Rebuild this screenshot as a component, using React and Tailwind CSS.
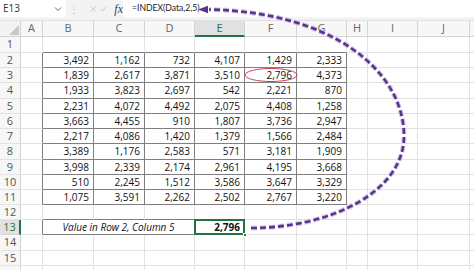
import React from 'react';

// column widths: row header, A, B, C, D, E, F, G, H, I, J, K
const COLS = ['w-[21px]', 'w-[22px]', 'w-[51px]', 'w-[51px]', 'w-[50px]', 'w-[50px]', 'w-[52px]', 'w-[50px]', 'w-[21px]', 'w-[50px]', 'w-[52px]', 'w-[20px]'];
const LETTERS = ['A', 'B', 'C', 'D', 'E', 'F', 'G', 'H', 'I', 'J', ''];

const DATA = [
  ['3,492', '1,162', '732', '4,107', '1,429', '2,333'],
  ['1,839', '2,617', '3,871', '3,510', '2,796', '4,373'],
  ['1,933', '3,823', '2,697', '542', '2,221', '870'],
  ['2,231', '4,072', '4,492', '2,075', '4,408', '1,258'],
  ['3,663', '4,455', '910', '1,807', '3,736', '2,947'],
  ['2,217', '4,086', '1,420', '1,379', '1,566', '2,484'],
  ['3,389', '1,176', '2,583', '571', '3,181', '1,909'],
  ['3,998', '2,339', '2,174', '2,961', '4,195', '3,668'],
  ['510', '2,245', '1,512', '3,586', '3,647', '3,329'],
  ['1,075', '3,591', '2,262', '2,502', '2,767', '3,220'],
];

const DATA_H = ['h-[15px]', 'h-[15px]', 'h-[16px]', 'h-[15px]', 'h-[15px]', 'h-[15px]', 'h-[16px]', 'h-[15px]', 'h-[15px]', 'h-[15px]'];

const RowHead = ({ n, active }) => (
  <div
    className={
      active
        ? 'w-[21px] shrink-0 flex items-center justify-center bg-[#e1e1e1] border-r-2 border-r-[#217346] border-b border-b-[#d4d4d4] text-[11px] text-[#217346]'
        : 'w-[21px] shrink-0 flex items-center justify-center bg-[#f7f7f7] border-r border-r-[#d4d4d4] border-b border-b-[#e2e2e2] text-[11px] text-[#555]'
    }
  >
    {n}
  </div>
);

// a plain cell; rb / bb flag dark right / bottom borders
const Cell = ({ col, rb, bb, children }) => (
  <div
    className={`${COLS[col]} shrink-0 border-r border-b ${rb ? 'border-r-[#7f7f7f]' : 'border-r-[#e2e2e2]'} ${bb ? 'border-b-[#7f7f7f]' : 'border-b-[#e2e2e2]'} flex items-center justify-end pr-[4px]`}
  >
    {children}
  </div>
);

const Toolbar = () => (
  <div className="h-[21px] flex items-start bg-[#f3f3f3] border-b border-[#e0e0e0] text-[10px] text-[#333]">
    <div className="w-[66px] h-[17px] bg-white flex items-center justify-between pl-[3px] pr-[4px]">
      <span>E13</span>
      <svg width="8" height="6" viewBox="0 0 8 6"><path d="M1 1.5 L4 4.5 L7 1.5" fill="none" stroke="#666" strokeWidth="1" /></svg>
    </div>
    <div className="w-[57px] h-[17px] flex items-center">
      <span className="ml-[3px] text-[#bbb] leading-none">⋮</span>
      <svg className="ml-[11px]" width="10" height="10" viewBox="0 0 10 10"><path d="M1 1 L9 9 M9 1 L1 9" stroke="#b8b8b8" strokeWidth="1" /></svg>
      <svg className="ml-[3px]" width="10" height="10" viewBox="0 0 10 10"><path d="M1 5 L4 8 L9 1.5" fill="none" stroke="#b8b8b8" strokeWidth="1" /></svg>
      <span className="ml-[8px] italic font-['Liberation_Serif',serif] text-[12px] text-[#444]">fx</span>
    </div>
    <div className="flex-1 h-[17px] bg-white flex items-center pl-[9px] font-['Lato',sans-serif] text-[8.6px] text-[#222]">=INDEX(Data,2,5)</div>
  </div>
);

const HeaderRow = () => (
  <div className="flex h-[16px] text-[11px] text-[#666]">
    <div className="w-[21px] shrink-0 relative bg-[#f3f3f3] border-r border-b border-[#d4d4d4]">
      <svg className="absolute right-[1px] bottom-[1px]" width="10" height="10" viewBox="0 0 10 10"><path d="M10 0 L10 10 L0 10 Z" fill="#c8c8c8" /></svg>
    </div>
    {LETTERS.map((l, i) => (
      <div
        key={i}
        className={
          i === 4
            ? `${COLS[i + 1]} shrink-0 flex items-center justify-center bg-[#e1e1e1] border-r border-r-[#d4d4d4] border-b-2 border-b-[#217346] text-[#217346]`
            : `${COLS[i + 1]} shrink-0 flex items-center justify-center bg-[#f7f7f7] border-r border-b border-[#d4d4d4]`
        }
      >
        {l}
      </div>
    ))}
  </div>
);

const Arrow = () => (
  <svg className="absolute left-0 top-0 pointer-events-none" width="474" height="270" viewBox="0 0 474 270">
    <ellipse cx="271" cy="75" rx="26" ry="6.5" fill="none" stroke="#d23e5a" strokeWidth="1" />
    <path d="M251 228 C330 228 404 192 404 136 C404 72 334 12 209 9.5" fill="none" stroke="#c7b2e6" strokeWidth="5" strokeDasharray="6 3" opacity="0.7" />
    <path d="M251 228 C330 228 404 192 404 136 C404 72 334 12 209 9.5" fill="none" stroke="#573689" strokeWidth="2.6" strokeDasharray="6 3" />
    <polygon points="198,9.5 208,5.8 208,13.2" fill="#573689" />
  </svg>
);

export default function App() {
  return (
    <div className="relative w-[474px] h-[270px] overflow-hidden bg-white font-['Open_Sans',sans-serif] text-[10px] text-[#111]">
      <Toolbar />
      <HeaderRow />

      {/* row 1 */}
      <div className="flex h-[16px]">
        <RowHead n={1} />
        {COLS.slice(1).map((_, i) => (
          <Cell key={i} col={i + 1} bb={i >= 1 && i <= 6} />
        ))}
      </div>

      {/* data rows 2-11 */}
      {DATA.map((row, r) => (
        <div key={r} className={`flex ${DATA_H[r]}`}>
          <RowHead n={r + 2} />
          <Cell col={1} rb />
          {row.map((v, c) => (
            <Cell key={c} col={c + 2} rb bb>{v}</Cell>
          ))}
          {COLS.slice(8).map((_, i) => (
            <Cell key={'e' + i} col={i + 8} />
          ))}
        </div>
      ))}

      {/* row 12 */}
      <div className="flex h-[15px]">
        <RowHead n={12} />
        {COLS.slice(1).map((_, i) => (
          <Cell key={i} col={i + 1} bb={i >= 1 && i <= 4} />
        ))}
      </div>

      {/* row 13 */}
      <div className="flex h-[15px]">
        <RowHead n={13} active />
        <Cell col={1} rb />
        <div className="w-[152px] shrink-0 border-r border-b border-[#7f7f7f] flex items-center justify-center italic">
          Value in Row 2, Column 5
        </div>
        <div className="w-[50px] shrink-0 relative border-r border-b border-[#7f7f7f]">
          <div className="absolute left-[-1px] top-[-1px] right-[-1px] bottom-[-1px] border-2 border-[#217346] flex items-center justify-end pr-[3px] font-bold">
            2,796
          </div>
          <div className="absolute right-[-3px] bottom-[-3px] w-[4px] h-[4px] bg-[#217346] border border-white" />
        </div>
        {COLS.slice(6).map((_, i) => (
          <Cell key={i} col={i + 6} />
        ))}
      </div>

      {/* rows 14-16 */}
      {[[14, 'h-[16px]'], [15, 'h-[15px]'], ['', 'h-[15px]']].map(([n, h], k) => (
        <div key={k} className={`flex ${h}`}>
          <RowHead n={n} />
          {COLS.slice(1).map((_, i) => (
            <Cell key={i} col={i + 1} />
          ))}
        </div>
      ))}

      <Arrow />
    </div>
  );
}
